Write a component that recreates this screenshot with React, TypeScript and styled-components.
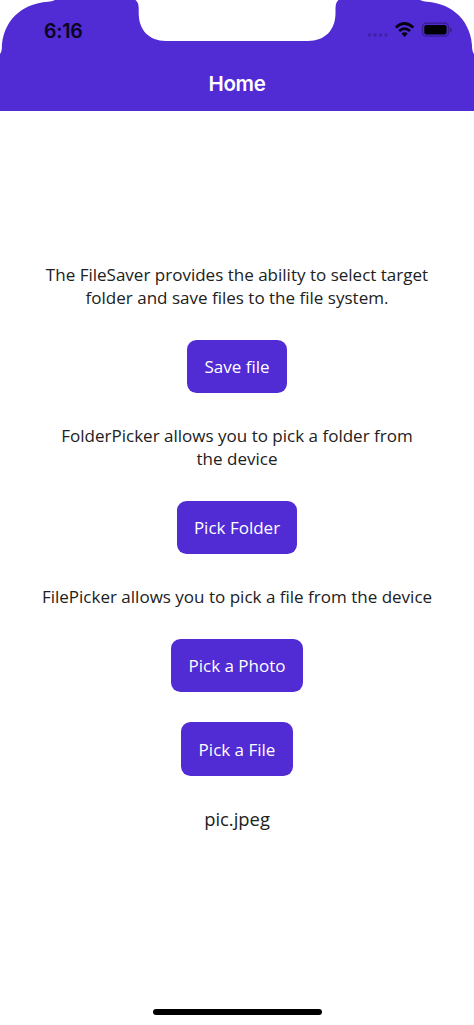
import React from 'react';
import styled, { createGlobalStyle } from 'styled-components';

const GlobalStyle = createGlobalStyle`
  *, *::before, *::after { box-sizing: border-box; }
  body { margin: 0; background: #fff; }
`;

const Screen = styled.div`
  display: flex;
  flex-direction: column;
  width: 474px;
  height: 1025px;
  overflow: hidden;
  background: #fff;
  color: #212121;
  font-family: 'Open Sans', sans-serif;
`;

const Header = styled.header`
  position: relative;
  display: flex;
  flex-direction: column;
  height: 110.5px;
  flex: none;
  background: #512bd4;
`;

const Bezel = styled.svg`
  position: absolute;
  top: 0;
  left: 0;
`;

const StatusBar = styled.div`
  position: relative;
  display: flex;
  justify-content: space-between;
  height: 58px;
  padding: 0 21px 0 44px;
`;

const Time = styled.span`
  margin-top: 19px;
  height: 24px;
  font: 600 19.5px/24px Inter, sans-serif;
  letter-spacing: -0.2px;
  color: #0a0420;
`;

const Title = styled.h1`
  margin: 13px 0 0;
  text-align: center;
  font: 600 20.5px/26px Inter, sans-serif;
  letter-spacing: -0.35px;
  color: #fff;
`;

const Content = styled.main`
  display: flex;
  flex-direction: column;
  align-items: center;
  flex: 1;
  padding-top: 152.9px;
`;

const Description = styled.p`
  margin: 0 0 30.8px;
  text-align: center;
  white-space: nowrap;
  font-size: 17.03px;
  line-height: 23px;
`;

const ActionButton = styled.button<{ $width: number }>`
  flex: none;
  width: ${({ $width }) => $width}px;
  height: 53.3px;
  margin: 0 0 30.6px;
  padding: 0;
  border: 0;
  border-radius: 9.5px;
  background: #512bd4;
  color: #fff;
  font: 400 17px/23px 'Open Sans', sans-serif;
`;

const FileName = styled.p`
  margin: 0;
  font-size: 18.4px;
  line-height: 26px;
`;

const HomeIndicator = styled.div`
  align-self: center;
  flex: none;
  width: 169px;
  height: 6px;
  margin-bottom: 10px;
  border-radius: 3px;
  background: #000;
`;

const StatusIcons = () => (
  <svg width="90" height="58" viewBox="363 0 90 58" aria-hidden="true">
    <g fill="#3f22a9">
      <circle cx="369.5" cy="35" r="1.7" />
      <circle cx="375" cy="35" r="1.7" />
      <circle cx="380.5" cy="35" r="1.7" />
      <circle cx="386" cy="35" r="1.7" />
    </g>
    <g fill="none" stroke="#05020f" strokeWidth="2.7">
      <path d="M395.9 27.4Q404.5 19.6 413.3 27.4" />
      <path d="M399.2 31Q404.5 26.2 410 31" />
    </g>
    <path d="M401.5 33.5Q404.6 30.9 407.7 33.5L404.6 37Z" fill="#05020f" />
    <rect x="422.5" y="23.2" width="26" height="13" rx="3.8" fill="none" stroke="#351c8b" strokeWidth="1.2" />
    <rect x="424.3" y="25" width="22.3" height="9.5" rx="2" fill="#000" />
    <path d="M450 27.5Q451.8 28.3 451.8 30T450 32.4Z" fill="#351c8b" />
  </svg>
);

const sections = [
  {
    lines: ['The FileSaver provides the ability to select target', 'folder and save files to the file system.'],
    actions: [{ label: 'Save file', width: 100 }],
  },
  {
    lines: ['FolderPicker allows you to pick a folder from', 'the device'],
    actions: [{ label: 'Pick Folder', width: 120 }],
  },
  {
    lines: ['FilePicker allows you to pick a file from the device'],
    actions: [
      { label: 'Pick a Photo', width: 131.5 },
      { label: 'Pick a File', width: 112 },
    ],
  },
];

export default function App() {
  return (
    <Screen>
      <GlobalStyle />
      <Header>
        <Bezel width="474" height="58" viewBox="0 0 474 58" fill="#fff" aria-hidden="true">
          <path d="M0 0H55Q52 1.6 48 1.8C21 3.5 2 22 1.8 49Q1.5 52 0 54Z" />
          <path d="M474 0H420Q423 1.6 427 1.8C453 3.5 472 22 472.2 49Q472.5 52 474 54Z" />
          <path d="M135.5 0Q138.7 2.5 138.7 8V13C138.7 30 149 41 166 41H308C325 41 335.5 30 335.5 13V8Q335.5 2.5 338.5 0Z" />
        </Bezel>
        <StatusBar>
          <Time>6:16</Time>
          <StatusIcons />
        </StatusBar>
        <Title>Home</Title>
      </Header>
      <Content>
        {sections.map(({ lines, actions }) => (
          <React.Fragment key={lines[0]}>
            <Description>
              {lines.map((line, i) => (
                <React.Fragment key={line}>
                  {i > 0 && <br />}
                  {line}
                </React.Fragment>
              ))}
            </Description>
            {actions.map(({ label, width }) => (
              <ActionButton key={label} $width={width}>{label}</ActionButton>
            ))}
          </React.Fragment>
        ))}
        <FileName>pic.jpeg</FileName>
      </Content>
      <HomeIndicator />
    </Screen>
  );
}
